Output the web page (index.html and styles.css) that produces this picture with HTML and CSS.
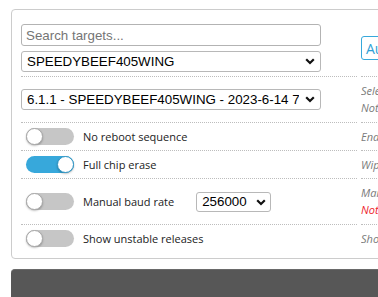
FILE: index.html
```html
<!DOCTYPE html>
<html>
<head>
<meta charset="utf-8">
<link rel="stylesheet" href="styles.css">
</head>
<body>
<div class="page">
  <div class="card">
    <div class="row top">
      <div class="cell-left top-left">
        <input class="search" type="text" placeholder="Search targets...">
        <div class="sel-wrap wide">
          <select class="sel"><option>SPEEDYBEEF405WING</option></select>
          <svg class="chev" width="10" height="7" viewBox="0 0 10 7"><path d="M1.2 1.3 L5 5 L8.8 1.3" fill="none" stroke="#111" stroke-width="2.2"/></svg>
        </div>
      </div>
      <div class="cell-right top-right">
        <button class="auto">Auto-detect</button>
      </div>
    </div>

    <div class="row">
      <div class="cell-left">
        <div class="sel-wrap wide">
          <select class="sel sel-clip"><option>6.1.1 - SPEEDYBEEF405WING - 2023-6-14 7:59 (stable)</option></select>
          <svg class="chev" width="10" height="7" viewBox="0 0 10 7"><path d="M1.2 1.3 L5 5 L8.8 1.3" fill="none" stroke="#111" stroke-width="2.2"/></svg>
        </div>
      </div>
      <div class="cell-right two">
        <div class="desc">Select firmware version for your board.</div>
        <div class="desc">Note: Older firmware may not be supported.</div>
      </div>
    </div>

    <div class="row">
      <div class="cell-left">
        <span class="toggle"><span class="knob"></span></span>
        <span class="label">No reboot sequence</span>
      </div>
      <div class="cell-right">
        <div class="desc">Enable if you powered your FC while the bootloader pins are bridged.</div>
      </div>
    </div>

    <div class="row">
      <div class="cell-left">
        <span class="toggle on"><span class="knob"></span></span>
        <span class="label">Full chip erase</span>
      </div>
      <div class="cell-right">
        <div class="desc">Wipes all configuration data currently stored on the board.</div>
      </div>
    </div>

    <div class="row">
      <div class="cell-left">
        <span class="toggle"><span class="knob"></span></span>
        <span class="label">Manual baud rate</span>
        <div class="sel-wrap baud">
          <select class="sel"><option>256000</option></select>
          <svg class="chev" width="10" height="7" viewBox="0 0 10 7"><path d="M1.2 1.3 L5 5 L8.8 1.3" fill="none" stroke="#111" stroke-width="2.2"/></svg>
        </div>
      </div>
      <div class="cell-right two">
        <div class="desc">Manual selection of baud rate for boards that don't support the default speed.</div>
        <div class="desc warn">Note: Not used when flashing via USB DFU</div>
      </div>
    </div>

    <div class="row last">
      <div class="cell-left">
        <span class="toggle"><span class="knob"></span></span>
        <span class="label">Show unstable releases</span>
      </div>
      <div class="cell-right">
        <div class="desc">Show Release-Candidates and Development Releases.</div>
      </div>
    </div>
  </div>

  <div class="bar"></div>
</div>
</body>
</html>
```
FILE: styles.css
```css
html, body {
  margin: 0;
  padding: 0;
  width: 378px;
  height: 297px;
  overflow: hidden;
  background: #ffffff;
}

.page {
  font-family: "Open Sans", "Liberation Sans", sans-serif;
  color: #333333;
  padding: 9px 0 0 11px;
  width: 700px;
}

.card {
  width: 660px;
  border: 1px solid #cccccc;
  border-radius: 4px;
  padding: 14px 0 6px 9px;
}

.row {
  display: flex;
}

.cell-left {
  width: 336px;
  flex: none;
  display: flex;
  align-items: center;
  border-bottom: 1px dotted #bdbdbd;
}

.cell-right {
  margin-left: 4px;
  width: 300px;
  flex: none;
  padding: 5px 0;
  border-bottom: 1px dotted #bdbdbd;
  overflow: hidden;
}

.cell-right.two {
  padding-bottom: 6px;
}

.row.last .cell-left,
.row.last .cell-right {
  border-bottom: none;
}

.top-left {
  flex-direction: column;
  align-items: flex-start;
  padding-bottom: 4px;
}

.top-right {
  display: flex;
  align-items: center;
  padding: 0 0 4px 0;
}

.search {
  box-sizing: border-box;
  width: 300px;
  height: 22px;
  margin: 0 0 5px 0;
  padding: 0 4px;
  border: 1px solid #b3b3b3;
  border-radius: 3px;
  font-family: "Liberation Sans", Arial, sans-serif;
  font-size: 13.33px;
  color: #000;
  outline: none;
}

.search::placeholder {
  color: #757575;
}

.sel-wrap {
  position: relative;
  display: inline-block;
}

.sel-wrap.wide {
  width: 300px;
}

.sel {
  -webkit-appearance: none;
  appearance: none;
  box-sizing: border-box;
  width: 100%;
  height: 21px;
  margin: 0;
  padding: 0 18px 0 5px;
  border: 1px solid #b8b8b8;
  border-radius: 3px;
  background: #ffffff;
  font-family: "Liberation Sans", Arial, sans-serif;
  font-size: 13.33px;
  color: #000;
  outline: none;
  display: block;
}

.sel.sel-clip {
  padding-right: 21px;
}

.chev {
  position: absolute;
  right: 6px;
  top: 7px;
  pointer-events: none;
}

.sel-wrap.baud {
  width: 75px;
  margin-left: 22px;
}

.sel-wrap.baud .sel {
  height: 20px;
}

.sel-wrap.baud .chev {
  right: 5px;
  top: 7px;
}

.auto {
  height: 24px;
  padding: 0 4px;
  border: 1px solid #37a8db;
  border-radius: 3px;
  background: #ffffff;
  color: #2f9fd6;
  font-family: "Open Sans", sans-serif;
  font-size: 14px;
  white-space: nowrap;
}

.desc {
  font-family: "Open Sans", sans-serif;
  font-style: italic;
  font-size: 11px;
  line-height: 17px;
  color: #7a7a7a;
  white-space: nowrap;
}

.desc.warn {
  color: #ee1c2c;
}

.toggle {
  position: relative;
  flex: none;
  box-sizing: border-box;
  width: 48px;
  height: 17px;
  margin-left: 5px;
  border-radius: 9px;
  background: #c6c6c6;
}

.toggle .knob {
  position: absolute;
  left: 0;
  top: 0;
  box-sizing: border-box;
  width: 17px;
  height: 17px;
  border-radius: 50%;
  background: #ffffff;
  border: 1px solid #a8a8a8;
  box-shadow: 0 1px 2px rgba(0,0,0,0.25);
}

.toggle.on {
  background: #37a8db;
}

.toggle.on .knob {
  left: auto;
  right: 0;
  border-color: #2f95c4;
}

.label {
  margin-left: 9px;
  font-size: 11px;
  color: #222222;
  white-space: nowrap;
}

.bar {
  margin-top: 10px;
  width: 660px;
  height: 40px;
  background: #575757;
  border-top: 1px solid #6a6a6a;
  border-radius: 4px 4px 0 0;
}
```
